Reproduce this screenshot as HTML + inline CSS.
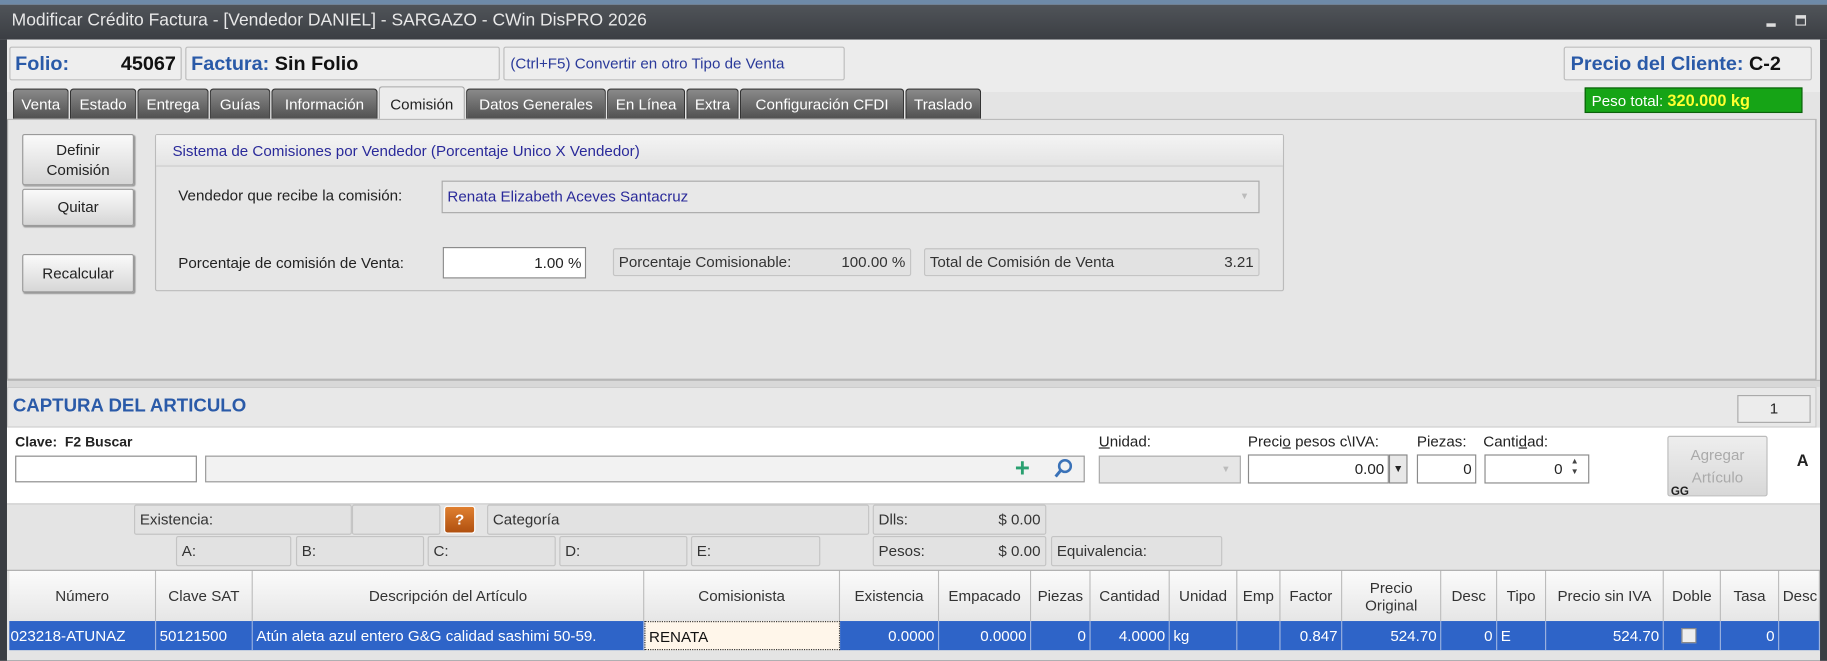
<!DOCTYPE html>
<html><head><meta charset="utf-8"><style>
*{box-sizing:border-box;margin:0;padding:0}
html,body{width:1827px;height:660px;overflow:hidden;background:#3a3d42}
#w{position:absolute;left:0;top:0;width:1568px;height:567px;transform:scale(1.16518);transform-origin:0 0;font-family:"Liberation Sans",sans-serif;font-size:13px;color:#222;background:#e4e4e4;overflow:hidden}
.a{position:absolute}
.box{position:absolute;border:1px solid #bdbdbd;background:#e8e8e8;border-radius:2px}
.tab{position:absolute;top:76px;height:26px;background:linear-gradient(#8a8a8a,#505050);color:#fff;border:1px solid #333;border-bottom:none;border-radius:3px 3px 0 0;font-size:13px;line-height:26px;text-align:center}
.btn{position:absolute;border:1px solid #9a9a9a;border-radius:2px;background:linear-gradient(#fafafa,#d6d6d6);box-shadow:1px 1px 1px #999;text-align:center;font-size:13px;color:#222}
.inp{position:absolute;background:#fff;border:1px solid #8a8a8a}
.lb{position:absolute;border:1px solid #c4c4c4;background:#e2e2e2;border-radius:2px;font-size:13px;line-height:20px;padding:0 4px;color:#333}
.gh{position:absolute;top:490px;height:43px;border-right:1px solid #bbb;background:linear-gradient(#fbfbfb,#e6e6e6);font-size:13px;display:flex;align-items:center;justify-content:center;text-align:center;line-height:15px;color:#333}
.gr{position:absolute;top:533px;height:25px;border-right:1px solid #9db3e0;background:#2e64c8;color:#fff;font-size:13px;line-height:25px;padding:0 3px;white-space:nowrap;overflow:hidden}
.r{text-align:right}
</style></head><body><div id="w">
<div class="a" style="left:0;top:0;width:1568px;height:4px;background:#6e8aa8"></div>
<div class="a" style="left:0;top:4px;width:1568px;height:30px;background:linear-gradient(#505459,#3b3e43);color:#e8e8e8;font-size:15px;line-height:28px;padding-left:10px">Modificar Crédito Factura - [Vendedor DANIEL] - SARGAZO - CWin DisPRO 2026</div>
<div class="a" style="left:1516px;top:20px;width:8px;height:3px;background:#ddd"></div>
<div class="a" style="left:1541px;top:13px;width:9px;height:9px;border:1px solid #ddd;border-top:3px solid #ddd"></div>
<div class="a" style="left:0;top:34px;width:6px;height:533px;background:#3a3d42"></div>
<div class="a" style="left:1562px;top:34px;width:6px;height:533px;background:#3a3d42"></div>
<div class="a" style="left:6px;top:34px;width:1556px;height:45px;background:#ececec"></div>
<div class="box" style="left:8px;top:40px;width:148px;height:29px;background:#eee"><span class="a" style="left:4px;top:4px;font-size:17px;font-weight:bold;color:#2a5aa8">Folio:</span><span class="a" style="right:4px;top:4px;font-size:17px;font-weight:bold;color:#111">45067</span></div>
<div class="box" style="left:159px;top:40px;width:270px;height:29px;background:#eee"><span class="a" style="left:4px;top:4px;font-size:17px;font-weight:bold;color:#2a5aa8">Factura: <span style="color:#111">Sin Folio</span></span></div>
<div class="box" style="left:432px;top:40px;width:293px;height:29px;background:#eee;color:#2a3a9a;font-size:13px;line-height:27px;padding-left:5px">(Ctrl+F5) Convertir en otro Tipo de Venta</div>
<div class="box" style="left:1342px;top:40px;width:213px;height:29px;background:#eee"><span class="a" style="left:5px;top:4px;font-size:17px;font-weight:bold;color:#2a5aa8">Precio del Cliente: <span style="color:#111">C-2</span></span></div>
<div class="a" style="left:1360px;top:75px;width:187px;height:22px;background:#16a416;border:1px solid #0a600a;color:#fff;font-size:13px;line-height:20px;padding-left:5px">Peso total: <b style="color:#ffff30;font-size:14px">320.000 kg</b></div>
<div class="tab" style="left:11px;width:48px">Venta</div>
<div class="tab" style="left:60px;width:57px">Estado</div>
<div class="tab" style="left:118px;width:61px">Entrega</div>
<div class="tab" style="left:180px;width:52px">Guías</div>
<div class="tab" style="left:233px;width:91px">Información</div>
<div class="tab" style="left:325px;width:74px;top:74px;height:29px;background:#ececec;color:#222;border-color:#aaa;line-height:29px">Comisión</div>
<div class="tab" style="left:400px;width:120px">Datos Generales</div>
<div class="tab" style="left:521px;width:67px">En Línea</div>
<div class="tab" style="left:589px;width:45px">Extra</div>
<div class="tab" style="left:635px;width:141px">Configuración CFDI</div>
<div class="tab" style="left:777px;width:65px">Traslado</div>
<div class="a" style="left:6px;top:102px;width:1553px;height:224px;background:#e6e6e6;border:1px solid #aaa;border-top:1px solid #bbb"></div>
<div class="btn" style="left:19px;top:115px;width:96px;height:44px;line-height:17px;padding-top:4px">Definir<br>Comisión</div>
<div class="btn" style="left:19px;top:162px;width:96px;height:32px;line-height:30px">Quitar</div>
<div class="btn" style="left:19px;top:218px;width:96px;height:33px;line-height:31px">Recalcular</div>
<div class="a" style="left:133px;top:115px;width:969px;height:135px;border:1px solid #bbb;background:#e6e6e6;border-radius:2px"></div>
<div class="a" style="left:134px;top:116px;width:967px;height:27px;background:linear-gradient(#f4f4f4,#e4e4e4);border-bottom:1px solid #ccc;color:#2a2a9a;line-height:27px;padding-left:14px">Sistema de Comisiones por Vendedor (Porcentaje Unico X Vendedor)</div>
<div class="a" style="left:153px;top:160px">Vendedor que recibe la comisión:</div>
<div class="a" style="left:379px;top:155px;width:702px;height:28px;border:1px solid #aaa;background:#e8e8e8;color:#2a2a9a;line-height:26px;padding-left:4px">Renata Elizabeth Aceves Santacruz<span class="a" style="right:8px;top:0;color:#bbb;font-size:8px">▼</span></div>
<div class="a" style="left:153px;top:218px">Porcentaje de comisión de Venta:</div>
<div class="inp" style="left:380px;top:212px;width:123px;height:27px;text-align:right;line-height:25px;padding-right:3px">1.00 %</div>
<div class="lb" style="left:526px;top:213px;width:256px;height:24px;line-height:22px">Porcentaje Comisionable:<span style="float:right">100.00 %</span></div>
<div class="lb" style="left:793px;top:213px;width:288px;height:24px;line-height:22px">Total de Comisión de Venta<span style="float:right">3.21</span></div>
<div class="a" style="left:6px;top:326px;width:1556px;height:6px;background:#d8d8d8;border-top:1px solid #bbb"></div>
<div class="a" style="left:6px;top:332px;width:1553px;height:35px;background:#e8e8e8;border:1px solid #ccc"></div>
<div class="a" style="left:11px;top:340px;font-size:16px;font-weight:bold;color:#2a5aa8">CAPTURA DEL ARTICULO</div>
<div class="a" style="left:1491px;top:339px;width:63px;height:24px;border:1px solid #aaa;background:#ececec;text-align:center;line-height:22px">1</div>
<div class="a" style="left:6px;top:367px;width:1556px;height:65px;background:#fff"></div>
<div class="a" style="left:13px;top:372px;font-weight:bold;font-size:12px">Clave:&nbsp; F2 Buscar</div>
<div class="inp" style="left:13px;top:391px;width:156px;height:23px"></div>
<div class="a" style="left:176px;top:391px;width:755px;height:23px;border:1px solid #999;background:#f2f2f2"></div>
<div class="a" style="left:871px;top:389px;color:#2aa070;font-size:22px;font-weight:bold">+</div>
<svg class="a" style="left:903px;top:393px" width="18" height="18" viewBox="0 0 18 18"><circle cx="11" cy="7" r="5" fill="none" stroke="#3a72b8" stroke-width="2.2"/><path d="M7.5 10.5 L3 16" stroke="#3a72b8" stroke-width="2.6"/></svg>
<div class="a" style="left:943px;top:371px"><u>U</u>nidad:</div>
<div class="a" style="left:943px;top:391px;width:122px;height:24px;border:1px solid #aaa;background:#e6e6e6"><span class="a" style="right:8px;top:6px;color:#bbb;font-size:8px">▼</span></div>
<div class="a" style="left:1071px;top:371px">Preci<u>o</u> pesos c\IVA:</div>
<div class="inp" style="left:1071px;top:390px;width:121px;height:25px;text-align:right;line-height:23px;padding-right:3px">0.00</div>
<div class="a" style="left:1192px;top:390px;width:16px;height:25px;border:1px solid #888;background:#e8e8e8;font-size:9px;text-align:center;line-height:23px">▼</div>
<div class="a" style="left:1216px;top:371px">Piezas:</div>
<div class="inp" style="left:1216px;top:390px;width:51px;height:25px;text-align:right;line-height:23px;padding-right:3px">0</div>
<div class="a" style="left:1273px;top:371px">Canti<u>d</u>ad:</div>
<div class="inp" style="left:1274px;top:390px;width:90px;height:25px;text-align:right;line-height:23px;padding-right:22px">0</div>
<div class="a" style="left:1348px;top:392px;font-size:7px;line-height:9px;color:#444">▲<br>▼</div>
<div class="a" style="left:1431px;top:374px;width:86px;height:52px;border:1px solid #bbb;border-radius:2px;background:linear-gradient(#eee,#d8d8d8);color:#aaa;text-align:center;line-height:19px;padding-top:6px">Agregar<br>Artículo</div>
<div class="a" style="left:1434px;top:417px;font-size:10px;font-weight:bold">GG</div>
<div class="a" style="left:1542px;top:387px;font-weight:bold;font-size:14px">A</div>
<div class="a" style="left:6px;top:432px;width:1556px;height:57px;background:#e4e4e4;border-top:1px solid #ccc"></div>
<div class="lb" style="left:115px;top:433px;width:187px;height:26px;line-height:24px">Existencia:</div>
<div class="lb" style="left:302px;top:433px;width:76px;height:26px"></div>
<div class="a" style="left:381px;top:434px;width:27px;height:24px;background:linear-gradient(#e08030,#b05010);border:1px solid #fff;border-radius:3px;color:#fff;font-weight:bold;text-align:center;line-height:22px">?</div>
<div class="lb" style="left:418px;top:433px;width:328px;height:26px;line-height:24px">Categoría</div>
<div class="lb" style="left:749px;top:433px;width:149px;height:26px;line-height:24px">Dlls:<span style="float:right">$ 0.00</span></div>
<div class="lb" style="left:151px;top:460px;width:99px;height:26px;line-height:24px">A:</div>
<div class="lb" style="left:254px;top:460px;width:110px;height:26px;line-height:24px">B:</div>
<div class="lb" style="left:367px;top:460px;width:110px;height:26px;line-height:24px">C:</div>
<div class="lb" style="left:480px;top:460px;width:110px;height:26px;line-height:24px">D:</div>
<div class="lb" style="left:593px;top:460px;width:111px;height:26px;line-height:24px">E:</div>
<div class="lb" style="left:749px;top:460px;width:149px;height:26px;line-height:24px">Pesos:<span style="float:right">$ 0.00</span></div>
<div class="lb" style="left:902px;top:460px;width:147px;height:26px;line-height:24px">Equivalencia:</div>
<div class="a" style="left:6px;top:489px;width:1556px;height:78px;background:#e4e4e4;border-top:1px solid #aaa"></div>
<div class="gh" style="left:8px;width:126px">Número</div>
<div class="gh" style="left:134px;width:83px">Clave SAT</div>
<div class="gh" style="left:217px;width:336px">Descripción del Artículo</div>
<div class="gh" style="left:553px;width:168px">Comisionista</div>
<div class="gh" style="left:721px;width:85px">Existencia</div>
<div class="gh" style="left:806px;width:79px">Empacado</div>
<div class="gh" style="left:885px;width:51px">Piezas</div>
<div class="gh" style="left:936px;width:68px">Cantidad</div>
<div class="gh" style="left:1004px;width:58px">Unidad</div>
<div class="gh" style="left:1062px;width:37px">Emp</div>
<div class="gh" style="left:1099px;width:53px">Factor</div>
<div class="gh" style="left:1152px;width:85px">Precio<br>Original</div>
<div class="gh" style="left:1237px;width:48px">Desc</div>
<div class="gh" style="left:1285px;width:42px">Tipo</div>
<div class="gh" style="left:1327px;width:101px">Precio sin IVA</div>
<div class="gh" style="left:1428px;width:49px">Doble</div>
<div class="gh" style="left:1477px;width:50px">Tasa</div>
<div class="gh" style="left:1527px;width:35px;justify-content:flex-start;padding-left:3px">Desc</div>
<div class="gr" style="left:8px;width:126px;padding:0 1px">023218-ATUNAZ</div>
<div class="gr" style="left:134px;width:83px">50121500</div>
<div class="gr" style="left:217px;width:336px;padding-right:0">Atún aleta azul entero G&amp;G calidad sashimi 50-59.</div>
<div class="gr" style="left:553px;width:168px;background:#fff6ea;color:#111;border:1px dotted #333">RENATA</div>
<div class="gr r" style="left:721px;width:85px">0.0000</div>
<div class="gr r" style="left:806px;width:79px">0.0000</div>
<div class="gr r" style="left:885px;width:51px">0</div>
<div class="gr r" style="left:936px;width:68px">4.0000</div>
<div class="gr" style="left:1004px;width:58px">kg</div>
<div class="gr" style="left:1062px;width:37px"></div>
<div class="gr r" style="left:1099px;width:53px">0.847</div>
<div class="gr r" style="left:1152px;width:85px">524.70</div>
<div class="gr r" style="left:1237px;width:48px">0</div>
<div class="gr" style="left:1285px;width:42px">E</div>
<div class="gr r" style="left:1327px;width:101px">524.70</div>
<div class="gr" style="left:1428px;width:49px"><span class="a" style="left:15px;top:6px;width:13px;height:13px;background:#eee;border:1px solid #888"></span></div>
<div class="gr r" style="left:1477px;width:50px">0</div>
<div class="gr" style="left:1527px;width:35px"></div>
</div></body></html>
